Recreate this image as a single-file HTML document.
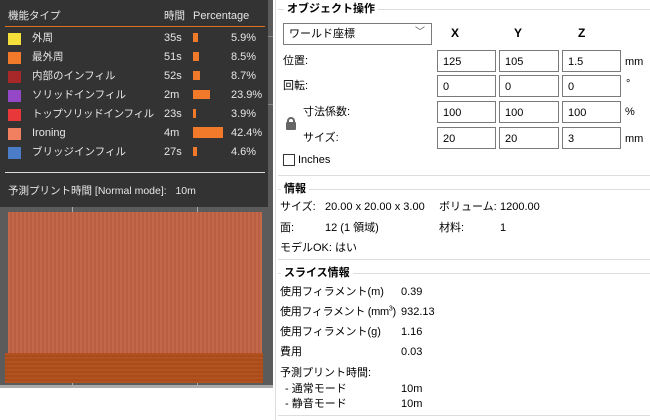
<!DOCTYPE html>
<html><head><meta charset="utf-8"><style>
*{margin:0;padding:0;box-sizing:border-box}
body{width:650px;height:420px;overflow:hidden;background:#fff;position:relative;font-family:"Liberation Sans","Noto Sans CJK JP",sans-serif;font-size:11px;line-height:14px;color:#000}
.a{position:absolute;white-space:nowrap;line-height:14px}
.vp{position:absolute;left:0;top:0;width:273px;height:388px;background:#5b5b5b}
.dk{position:absolute;left:0;top:0;width:268px;height:207px;background:#333;color:#e6e6e6}
.dk .a{font-size:11px}
.nm{font-size:10.5px !important}
.sw{position:absolute;left:8px;width:13px;height:12px}
.bar{position:absolute;left:193px;height:9px;background:#f07a2a}
.in{position:absolute;height:22px;border:1px solid #7a7a7a;background:#fff;padding:4px 0 0 5px;font-size:11px;line-height:14px}
.hl{position:absolute;height:1px;background:#ddd}
</style></head><body>
<div class="vp"></div>
<div class="a" style="left:72px;top:0;width:1px;height:388px;background:#aaa"></div>
<div class="a" style="left:197px;top:0;width:1px;height:388px;background:#aaa"></div>
<div class="a" style="left:0;top:36px;width:273px;height:1px;background:#888"></div>
<div class="a" style="left:0;top:104px;width:273px;height:1px;background:#888"></div>
<div class="dk">
<div class="a nm" style="left:8px;top:9px">機能タイプ</div>
<div class="a nm" style="left:164px;top:9px">時間</div>
<div class="a" style="left:193px;top:9px">Percentage</div>
<div class="a" style="left:5px;top:26px;width:260px;height:1px;background:#e0701e"></div>
<div class="sw" style="top:33px;background:#f4df3a"></div><div class="a nm" style="left:32px;top:31px">外周</div><div class="a" style="left:164px;top:31px">35s</div><div class="bar" style="top:33px;width:5px"></div><div class="a" style="left:231px;top:31px">5.9%</div>
<div class="sw" style="top:52px;background:#f07a2a"></div><div class="a nm" style="left:32px;top:50px">最外周</div><div class="a" style="left:164px;top:50px">51s</div><div class="bar" style="top:52px;width:6px"></div><div class="a" style="left:231px;top:50px">8.5%</div>
<div class="sw" style="top:71px;background:#a8282a"></div><div class="a nm" style="left:32px;top:69px">内部のインフィル</div><div class="a" style="left:164px;top:69px">52s</div><div class="bar" style="top:71px;width:7px"></div><div class="a" style="left:231px;top:69px">8.7%</div>
<div class="sw" style="top:90px;background:#9448c8"></div><div class="a nm" style="left:32px;top:88px">ソリッドインフィル</div><div class="a" style="left:164px;top:88px">2m</div><div class="bar" style="top:90px;width:17px"></div><div class="a" style="left:231px;top:88px">23.9%</div>
<div class="sw" style="top:109px;background:#e8383a"></div><div class="a nm" style="left:32px;top:107px;letter-spacing:-0.3px">トップソリッドインフィル</div><div class="a" style="left:164px;top:107px">23s</div><div class="bar" style="top:109px;width:3px"></div><div class="a" style="left:231px;top:107px">3.9%</div>
<div class="sw" style="top:128px;background:#f08060"></div><div class="a" style="left:32px;top:126px">Ironing</div><div class="a" style="left:164px;top:126px">4m</div><div class="bar" style="top:127px;width:30px;height:11px"></div><div class="a" style="left:231px;top:126px">42.4%</div>
<div class="sw" style="top:147px;background:#4a7cc8"></div><div class="a nm" style="left:32px;top:145px">ブリッジインフィル</div><div class="a" style="left:164px;top:145px">27s</div><div class="bar" style="top:147px;width:4px"></div><div class="a" style="left:231px;top:145px">4.6%</div>
<div class="a" style="left:5px;top:172px;width:260px;height:1px;background:#ddd"></div>
<div class="a nm" style="left:8px;top:184px">予測プリント時間 [Normal mode]:&nbsp;&nbsp; 10m</div>
</div>
<div class="a" style="left:8px;top:212px;width:254px;height:142px;background:repeating-linear-gradient(90deg,#c4684a 0 2px,#b95e42 2px 4px)"></div>
<div class="a" style="left:5px;top:353px;width:258px;height:30px;background:repeating-linear-gradient(0deg,#b2531f 0 2px,#a84c1c 2px 4px)"></div>
<div class="a" style="left:0;top:385px;width:273px;height:3px;background:#aaa"></div>
<div class="a" style="left:275px;top:0;width:1px;height:420px;background:#ddd"></div>

<div class="hl" style="left:278px;top:9px;width:372px"></div>
<div class="a" style="left:284px;top:2px;background:#fff;padding:0 3px;font-weight:bold">オブジェクト操作</div>
<div class="a" style="left:283px;top:23px;width:149px;height:22px;border:1px solid #7a7a7a;padding:3px 0 0 5px">ワールド座標<span style="position:absolute;right:6px;top:2px;color:#555;font-size:10px">﹀</span></div>
<div class="a" style="left:451px;top:26px;font-weight:bold;font-size:12px">X</div>
<div class="a" style="left:514px;top:26px;font-weight:bold;font-size:12px">Y</div>
<div class="a" style="left:578px;top:26px;font-weight:bold;font-size:12px">Z</div>
<div class="a" style="left:283px;top:54px">位置:</div>
<div class="a" style="left:283px;top:79px">回転:</div>
<div class="a" style="left:303px;top:105px">寸法係数:</div>
<div class="a" style="left:303px;top:131px">サイズ:</div>
<div class="a" style="left:286px;top:117px;width:10px;height:13px"><div style="position:absolute;left:1px;top:0;width:8px;height:8px;border:2px solid #666;border-radius:4px 4px 0 0"></div><div style="position:absolute;left:0;top:5px;width:10px;height:8px;background:#666;border-radius:1px"></div></div>
<div class="in" style="left:437px;top:50px;width:59px">125</div><div class="in" style="left:499px;top:50px;width:60px">105</div><div class="in" style="left:562px;top:50px;width:59px">1.5</div><div class="a" style="left:625px;top:55px">mm</div>
<div class="in" style="left:437px;top:75px;width:59px">0</div><div class="in" style="left:499px;top:75px;width:60px">0</div><div class="in" style="left:562px;top:75px;width:59px">0</div><div class="a" style="left:626px;top:77px">°</div>
<div class="in" style="left:437px;top:101px;width:59px">100</div><div class="in" style="left:499px;top:101px;width:60px">100</div><div class="in" style="left:562px;top:101px;width:59px">100</div><div class="a" style="left:625px;top:105px">%</div>
<div class="in" style="left:437px;top:127px;width:59px">20</div><div class="in" style="left:499px;top:127px;width:60px">20</div><div class="in" style="left:562px;top:127px;width:59px">3</div><div class="a" style="left:625px;top:132px">mm</div>
<div class="a" style="left:283px;top:154px;width:12px;height:12px;border:1px solid #333"></div>
<div class="a" style="left:298px;top:153px">Inches</div>
<div class="hl" style="left:278px;top:175px;width:372px"></div>

<div class="hl" style="left:278px;top:189px;width:372px"></div>
<div class="a" style="left:281px;top:182px;background:#fff;padding:0 3px;font-weight:bold">情報</div>
<div class="a" style="left:280px;top:200px">サイズ:</div><div class="a" style="left:325px;top:200px">20.00 x 20.00 x 3.00</div><div class="a" style="left:439px;top:200px">ボリューム:</div><div class="a" style="left:500px;top:200px">1200.00</div>
<div class="a" style="left:280px;top:221px">面:</div><div class="a" style="left:325px;top:221px">12 (1 領域)</div><div class="a" style="left:439px;top:221px">材料:</div><div class="a" style="left:500px;top:221px">1</div>
<div class="a" style="left:280px;top:241px">モデルOK: はい</div>
<div class="hl" style="left:278px;top:259px;width:372px"></div>
<div class="hl" style="left:278px;top:273px;width:372px"></div>
<div class="a" style="left:281px;top:266px;background:#fff;padding:0 3px;font-weight:bold">スライス情報</div>
<div class="a" style="left:280px;top:285px">使用フィラメント(m)</div><div class="a" style="left:401px;top:285px">0.39</div>
<div class="a" style="left:280px;top:305px;letter-spacing:-0.3px">使用フィラメント (mm<sup style="font-size:7px;line-height:0">3</sup>)</div><div class="a" style="left:401px;top:305px">932.13</div>
<div class="a" style="left:280px;top:325px">使用フィラメント(g)</div><div class="a" style="left:401px;top:325px">1.16</div>
<div class="a" style="left:280px;top:345px">費用</div><div class="a" style="left:401px;top:345px">0.03</div>
<div class="a" style="left:280px;top:366px">予測プリント時間:</div>
<div class="a" style="left:285px;top:382px">- 通常モード</div><div class="a" style="left:401px;top:382px">10m</div>
<div class="a" style="left:285px;top:397px">- 静音モード</div><div class="a" style="left:401px;top:397px">10m</div>
<div class="hl" style="left:278px;top:415px;width:372px"></div>
</body></html>
